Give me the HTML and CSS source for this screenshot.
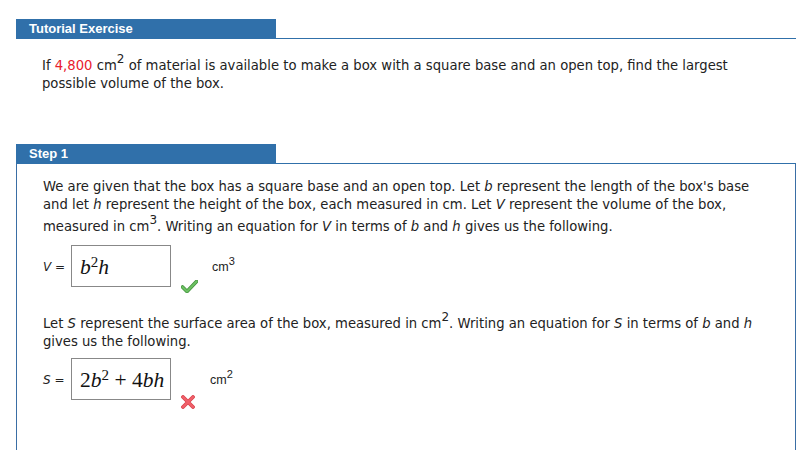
FILE: index.html
```html
<!DOCTYPE html>
<html>
<head>
<meta charset="utf-8">
<link rel="stylesheet" href="styles.css">
</head>
<body>
<div class="page">
  <section class="exercise">
    <div class="head"><div class="tab">Tutorial Exercise</div></div>
    <p class="text problem">If <span class="red">4,800</span> cm<span class="sup">2</span> of material is available to make a box with a square base and an open top, find the largest possible volume of the box.</p>
  </section>

  <section class="step">
    <div class="head step-head"><div class="tab">Step 1</div></div>
    <div class="step-box">
      <p class="text">We are given that the box has a square base and an open top. Let <i>b</i> represent the length of the box's base and let <i>h</i> represent the height of the box, each measured in cm. Let <i>V</i> represent the volume of the box, measured in cm<span class="sup">3</span>. Writing an equation for <i>V</i> in terms of <i>b</i> and <i>h</i> gives us the following.</p>
      <div class="eq eq1">
        <span class="lbl"><span><i>V</i> =</span></span>
        <span class="box"><span class="math"><i>b</i><sup>2</sup><i>h</i></span></span>
        <span class="mark mark-ok">
          <svg width="17" height="13" viewBox="0 0 17 13"><path d="M1.5 7 L6 11.5 L15.5 1.5" fill="none" stroke="#3f8f3a" stroke-width="3.6" stroke-linecap="round" stroke-linejoin="round"/><path d="M1.5 7 L6 11.5 L15.5 1.5" fill="none" stroke="#6cc062" stroke-width="2.2" stroke-linecap="round" stroke-linejoin="round"/></svg>
        </span>
        <span class="unit"><span>cm<sup>3</sup></span></span>
      </div>
      <p class="text">Let <i>S</i> represent the surface area of the box, measured in cm<span class="sup">2</span>. Writing an equation for <i>S</i> in terms of <i>b</i> and <i>h</i> gives us the following.</p>
      <div class="eq eq2">
        <span class="lbl"><span><i>S</i> =</span></span>
        <span class="box"><span class="math">2<i>b</i><sup>2</sup> + 4<i>bh</i></span></span>
        <span class="mark mark-bad">
          <svg width="14" height="14" viewBox="0 0 14 14"><path d="M2 2 L12 12 M12 2 L2 12" fill="none" stroke="#d9434c" stroke-width="3.8" stroke-linecap="round"/><path d="M2 2 L12 12 M12 2 L2 12" fill="none" stroke="#f0606a" stroke-width="2.4" stroke-linecap="round"/></svg>
        </span>
        <span class="unit u2"><span>cm<sup>2</sup></span></span>
      </div>
    </div>
  </section>
</div>
</body>
</html>
```
FILE: styles.css
```css
html, body {
  margin: 0;
  padding: 0;
  background: #fff;
}
.page {
  padding: 19px 13px 0 16px;
  width: 780px;
  font-family: "DejaVu Sans", Verdana, sans-serif;
  color: #222;
}
.head {
  border-bottom: 1px solid #3070aa;
  height: 19px;
}
.tab {
  width: 247px;
  height: 19px;
  padding-left: 13px;
  background: #3070aa;
  color: #fff;
  font-family: "Liberation Sans", Arial, sans-serif;
  font-weight: bold;
  font-size: 13px;
  line-height: 19px;
}
.text {
  font-size: 13.2px;
  line-height: 18px;
  margin: 0;
}
sup {
  font-variant-position: normal;
}
.sup {
  font-size: 12px;
  vertical-align: 7px;
  line-height: 12px;
}
.text i {
  font-style: oblique;
}
.problem {
  margin: 14px 0 0 26px;
  width: 720px;
}
.red {
  color: #e8202e;
}
.step {
  margin-top: 51px;
}
.step-head {
  border-bottom: none;
}
.step-box {
  border: 1px solid #3a6ea5;
  border-top-color: #3070aa;
  height: 300px;
  padding: 14px 20px 0 26px;
}
.step-box .text {
  width: 720px;
}
.eq {
  display: flex;
  align-items: stretch;
  height: 42px;
}
.eq1 {
  margin: 9px 0 24px 0;
}
.eq2 {
  margin: 7px 0 0 0;
}
.lbl {
  width: 28px;
  font-size: 12px;
  display: flex;
  align-items: center;
  padding-top: 2px;
  white-space: nowrap;
}
.lbl i {
  font-style: oblique;
}
.box {
  height: 40px;
  border: 1px solid #888;
  display: flex;
  align-items: center;
  padding-left: 8px;
  box-sizing: content-box;
  width: 90px;
}
.math {
  font-family: "Liberation Serif", "Times New Roman", serif;
  font-size: 21.5px;
  color: #111;
  padding-top: 2px;
  white-space: nowrap;
}
.math sup {
  font-size: 15px;
  line-height: 0;
  vertical-align: 0.5em;
}
.mark {
  width: 41px;
  display: flex;
  align-items: flex-end;
  padding-left: 10px;
  box-sizing: border-box;
  position: relative;
  top: 6px;
}
.mark-bad {
  top: 9px;
}
.unit {
  font-family: "Liberation Sans", Arial, sans-serif;
  font-size: 12.5px;
  display: flex;
  align-items: center;
  padding-bottom: 2px;
}
.unit sup {
  font-size: 11px;
  vertical-align: 6px;
  line-height: 10px;
}
.u2 {
  margin-left: -2px;
}
```
